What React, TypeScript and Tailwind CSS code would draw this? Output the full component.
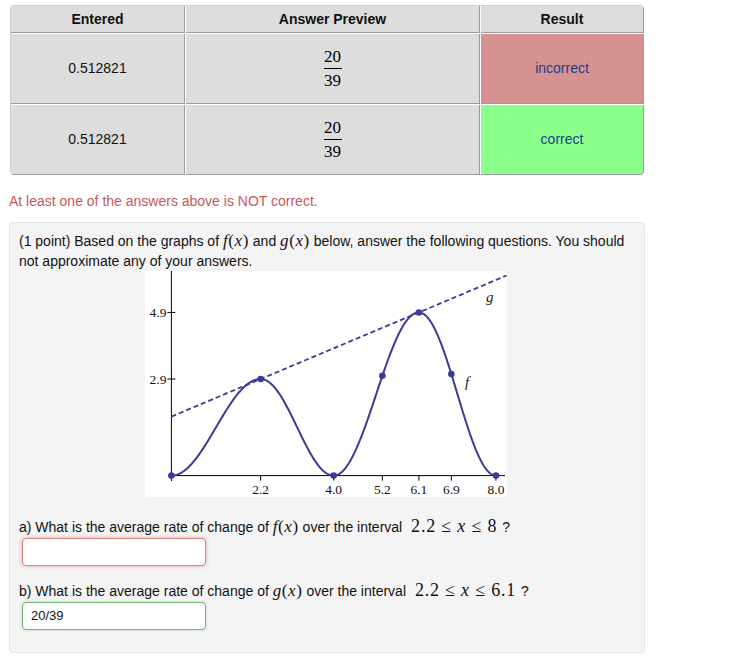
import React from 'react';

const sans = { fontFamily: '"Liberation Sans", Arial, sans-serif' };
const serif = { fontFamily: '"Liberation Serif", "Times New Roman", serif' };

const INK = '#3b3b97';

// graph mapping
const X = (x: number) => 26.4 + 40.57 * x;
const Y = (y: number) => 204.6 - 33.3 * y;

function f(x: number) {
  if (x <= 2.2) return (2.9 * (1 - Math.cos((Math.PI * x) / 2.2))) / 2;
  if (x <= 4) return (2.9 * (1 + Math.cos((Math.PI * (x - 2.2)) / 1.8))) / 2;
  if (x <= 6.1) return (4.9 * (1 - Math.cos((Math.PI * (x - 4)) / 2.1))) / 2;
  return (4.9 * (1 + Math.cos((Math.PI * (x - 6.1)) / 1.9))) / 2;
}

const g = (x: number) => 2.9 + (x - 2.2) * (20 / 39);

function curvePath() {
  const pts: string[] = [];
  for (let i = 0; i <= 400; i++) {
    const x = (8 * i) / 400;
    pts.push(`${i === 0 ? 'M' : 'L'}${X(x).toFixed(2)},${Y(f(x)).toFixed(2)}`);
  }
  return pts.join(' ');
}

const Graph: React.FC = () => {
  const dots = [0, 2.2, 4, 5.2, 6.1, 6.9, 8];
  const xTicks = ['2.2', '4.0', '5.2', '6.1', '6.9', '8.0'];
  return (
    <svg width="362" height="226" viewBox="0 0 362 226" className="block bg-white">
      {/* axes */}
      <line x1={X(0)} y1="0" x2={X(0)} y2="210" stroke="#000" strokeWidth="1" />
      <line x1={X(0) - 3} y1={Y(0)} x2="360" y2={Y(0)} stroke="#000" strokeWidth="1" />
      {[4.9, 2.9].map((v) => (
        <g key={v}>
          <line x1={X(0) - 4} y1={Y(v)} x2={X(0) + 4} y2={Y(v)} stroke="#000" strokeWidth="1" />
          <text x={X(0) - 5} y={Y(v) + 4.5} textAnchor="end" fontSize="13.5" style={serif} fill="#111">
            {v.toFixed(1)}
          </text>
        </g>
      ))}
      {xTicks.map((t) => (
        <g key={t}>
          <line x1={X(+t)} y1={Y(0)} x2={X(+t)} y2={Y(0) + 5} stroke="#000" strokeWidth="1" />
          <text x={X(+t)} y="223" textAnchor="middle" fontSize="13.5" style={serif} fill="#111">
            {t}
          </text>
        </g>
      ))}
      {/* g line */}
      <line
        x1={X(0)}
        y1={Y(g(0))}
        x2={X(8.26)}
        y2={Y(g(8.26))}
        stroke={INK}
        strokeWidth="1.8"
        strokeDasharray="5 3"
      />
      {/* f curve */}
      <path d={curvePath()} fill="none" stroke={INK} strokeWidth="2" />
      {dots.map((x) => (
        <circle key={x} cx={X(x)} cy={Y(f(x))} r="3.3" fill={INK} />
      ))}
      <text x="341" y="31" fontSize="15" fontStyle="italic" style={serif} fill="#222">
        g
      </text>
      <text x="320" y="116" fontSize="15" fontStyle="italic" style={serif} fill="#222">
        f
      </text>
    </svg>
  );
};

const Frac: React.FC = () => (
  <div
    className="inline-flex flex-col items-center text-[17px] leading-[17px] text-black"
    style={serif}
  >
    <span>20</span>
    <span className="my-[3px] h-px w-[18px] bg-black" />
    <span>39</span>
  </div>
);

const Fx: React.FC<{ name: string }> = ({ name }) => (
  <span className="text-[17px] leading-none tracking-[0.6px]" style={serif}>
    <i>{name}</i>(<i>x</i>)
  </span>
);

const Interval: React.FC<{ hi: string }> = ({ hi }) => (
  <span className="mx-[5px] text-[18px] leading-none tracking-[0.8px]" style={serif}>
    2.2 ≤ <i>x</i> ≤ {hi}
  </span>
);

export default function App() {
  const cell = 'flex items-center justify-center border-r border-b border-[#9a9a9a] text-[14px]';
  return (
    <div className="min-h-[658px] w-[751px] bg-white pl-[9px] pt-[5px] text-[#111]" style={sans}>
      {/* results table */}
      <div className="ml-[1px] w-[634px] overflow-hidden rounded-[4px] border-t border-l border-[#cfcfcf] bg-white">
        <div className="grid grid-cols-[174px_294px_1fr] gap-px">
          <div className={`${cell} h-[27px] bg-[#dddddd] font-bold`}>Entered</div>
          <div className={`${cell} h-[27px] bg-[#dddddd] font-bold`}>Answer Preview</div>
          <div className={`${cell} h-[27px] bg-[#dddddd] font-bold`}>Result</div>

          <div className={`${cell} h-[70px] bg-[#dddddd]`}>0.512821</div>
          <div className={`${cell} h-[70px] bg-[#dddddd]`}>
            <Frac />
          </div>
          <div className={`${cell} h-[70px] bg-[#d69191] text-[#243c8c]`}>incorrect</div>

          <div className={`${cell} h-[70px] bg-[#dddddd]`}>0.512821</div>
          <div className={`${cell} h-[70px] bg-[#dddddd]`}>
            <Frac />
          </div>
          <div className={`${cell} h-[70px] rounded-br-[4px] bg-[#8bff8b] text-[#243c8c]`}>correct</div>
        </div>
      </div>

      <p className="mt-[16px] text-[14px] leading-[20px] text-[#c9575a]">
        At least one of the answers above is NOT correct.
      </p>

      {/* problem */}
      <div className="mt-[11px] w-[636px] rounded-[4px] border border-[#e3e3e3] bg-[#f4f4f4] px-[9px] pt-[8px] pb-[22px] text-[14px] leading-[20px] text-[#111]">
        <p>
          (1 point) Based on the graphs of <Fx name="f" /> and <Fx name="g" /> below, answer the following
          questions. You should not approximate any of your answers.
        </p>

        <div className="ml-[126px]">
          <Graph />
        </div>

        <p className="mt-[20px]">
          a) What is the average rate of change of <Fx name="f" /> over the interval <Interval hi="8" />?
        </p>
        <div className="ml-[3px] mt-px h-[28px] w-[184px] rounded-[4px] border border-[#d9827f] bg-white shadow-[0_0_4px_rgba(217,83,79,0.45)]" />

        <p className="mt-[15px]">
          b) What is the average rate of change of <Fx name="g" /> over the interval <Interval hi="6.1" />?
        </p>
        <div className="ml-[3px] mt-px flex h-[28px] w-[184px] items-center rounded-[4px] border border-[#72b472] bg-white px-[8px] text-[13px] shadow-[0_0_3px_rgba(92,184,92,0.4)]">
          20/39
        </div>
      </div>
    </div>
  );
}
